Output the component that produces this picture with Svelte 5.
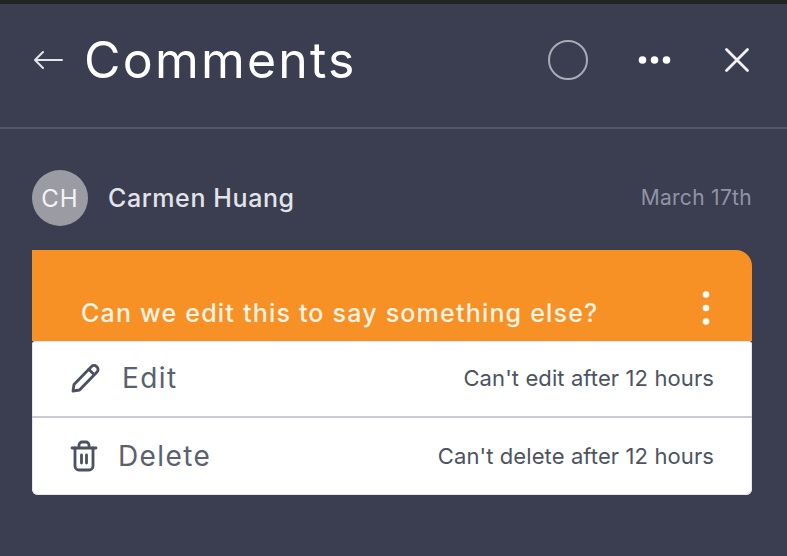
<script>
	const actions = [
		{ id: 'edit', label: 'Edit', note: "Can't edit after 12 hours" },
		{ id: 'delete', label: 'Delete', note: "Can't delete after 12 hours" },
	];
</script>

<div class="panel">
	<header class="head">
		<button class="icon back" aria-label="Back">
			<svg width="30" height="22" viewBox="0 0 30 22" fill="none" stroke="#e6e6ea" stroke-width="2" stroke-linecap="round" stroke-linejoin="round">
				<path d="M2 11h27M10 3l-8 8 8 8" />
			</svg>
		</button>
		<h1>Comments</h1>
		<div class="tools">
			<span class="ring"></span>
			<button class="icon dots" aria-label="More">
				<svg width="33" height="10" viewBox="0 0 33 10" fill="#fff">
					<circle cx="4.500" cy="5" r="3.800" /><circle cx="16.500" cy="5" r="3.800" /><circle cx="28.500" cy="5" r="3.800" />
				</svg>
			</button>
			<button class="icon close" aria-label="Close">
				<svg width="26" height="26" viewBox="0 0 26 26" stroke="#f2f2f4" stroke-width="2.800" stroke-linecap="round">
					<path d="M2.500 2.500l21 21M23.500 2.500l-21 21" />
				</svg>
			</button>
		</div>
	</header>

	<section class="comment">
		<div class="meta">
			<span class="avatar">CH</span>
			<span class="name">Carmen Huang</span>
			<span class="date">March 17th</span>
		</div>

		<div class="bubble">
			<p>Can we edit this to say something else?</p>
			<svg class="kebab" width="10" height="36" viewBox="0 0 10 36" fill="#fff">
				<circle cx="5" cy="4.500" r="3.300" /><circle cx="5" cy="18" r="3.300" /><circle cx="5" cy="31.500" r="3.300" />
			</svg>
		</div>

		<ul class="menu">
			{#each actions as a}
				<li class={a.id}>
					{#if a.id === 'edit'}
						<svg width="32" height="32" viewBox="0 0 32 32" fill="none" stroke="#4a5160" stroke-width="2.800" stroke-linejoin="round" stroke-linecap="round">
							<path d="M3 29l1-6.500L21.500 4.500a3.500 3.500 0 0 1 5 0l.5.500a3.500 3.500 0 0 1 0 5L9.500 28z" />
							<path d="M19 7.500l5 5" />
						</svg>
					{:else}
						<svg width="28" height="32" viewBox="0 0 28 32" fill="none" stroke="#4a5160" stroke-width="2.800" stroke-linejoin="round" stroke-linecap="round">
							<path d="M2 8h24M9 8V5a3 3 0 0 1 3-3h4a3 3 0 0 1 3 3v3" />
							<path d="M5 8v18a4 4 0 0 0 4 4h10a4 4 0 0 0 4-4V8" />
							<path d="M11.500 15v8M16.500 15v8" />
						</svg>
					{/if}
					<span class="label">{a.label}</span>
					<span class="note">{a.note}</span>
				</li>
			{/each}
		</ul>
	</section>
</div>

<style>
	:global(body) {
		margin: 0;
		background: #3b3d50;
	}
	.panel {
		height: 556px;
		box-sizing: border-box;
		border-top: 4px solid #232323;
		background: #3b3d50;
		font-family: Inter, sans-serif;
		overflow: hidden;
	}
	.head {
		display: flex;
		align-items: center;
		height: 125px;
		box-sizing: border-box;
		border-bottom: 2px solid #54566a;
		padding: 0 37px 12px 33px;
	}
	.icon {
		display: flex;
		padding: 0;
		border: 0;
		background: none;
	}
	h1 {
		margin: 0 0 0 21px;
		font-size: 50px;
		font-weight: 400;
		color: #fff;
		letter-spacing: 2.2px;
	}
	.tools {
		display: flex;
		align-items: center;
		margin-left: auto;
	}
	.ring {
		width: 36px;
		height: 36px;
		border: 2px solid #a9abb5;
		border-radius: 50%;
	}
	.dots {
		margin-left: 50px;
	}
	.close {
		margin-left: 53px;
	}
	.comment {
		padding: 41px 35px 0 32px;
	}
	.meta {
		display: flex;
		align-items: center;
		height: 56px;
	}
	.avatar {
		display: grid;
		place-items: center;
		width: 56px;
		height: 56px;
		border-radius: 50%;
		background: #9b9ca3;
		color: #f4f4f4;
		font-size: 24px;
		letter-spacing: 1px;
	}
	.name {
		margin-left: 20px;
		font-size: 25px;
		font-weight: 500;
		letter-spacing: 0.6px;
		color: #e2e4ea;
	}
	.date {
		margin-left: auto;
		padding-bottom: 2px;
		font-size: 21px;
		letter-spacing: 0.3px;
		color: #8f95a3;
	}
	.bubble {
		display: flex;
		align-items: center;
		justify-content: space-between;
		height: 91px;
		box-sizing: border-box;
		margin-top: 24px;
		padding: 34px 41px 0 49px;
		background: #f89125;
		border-radius: 0 16px 0 0;
	}
	.bubble p {
		margin: 0;
		font-size: 25px;
		font-weight: 500;
		letter-spacing: 1.2px;
		color: #fff3e4;
	}
	.kebab {
		margin-bottom: 10px;
	}
	.menu {
		list-style: none;
		margin: 0;
		padding: 0;
		background: #fff;
		border-radius: 4px 4px 6px 6px;
		box-shadow: inset 0 0 0 1px #e6e7ee;
		overflow: hidden;
	}
	.menu li {
		display: flex;
		align-items: center;
		height: 75px;
		box-sizing: border-box;
		padding: 0 38px 2px;
	}
	.menu li + li {
		height: 79px;
		border-top: 2px solid #c9cbda;
	}
	.label {
		margin-left: 20px;
		font-size: 28px;
		letter-spacing: 1.4px;
		color: #596170;
	}
	.note {
		margin-left: auto;
		font-size: 22px;
		letter-spacing: 0.1px;
		color: #4d5361;
	}
</style>
